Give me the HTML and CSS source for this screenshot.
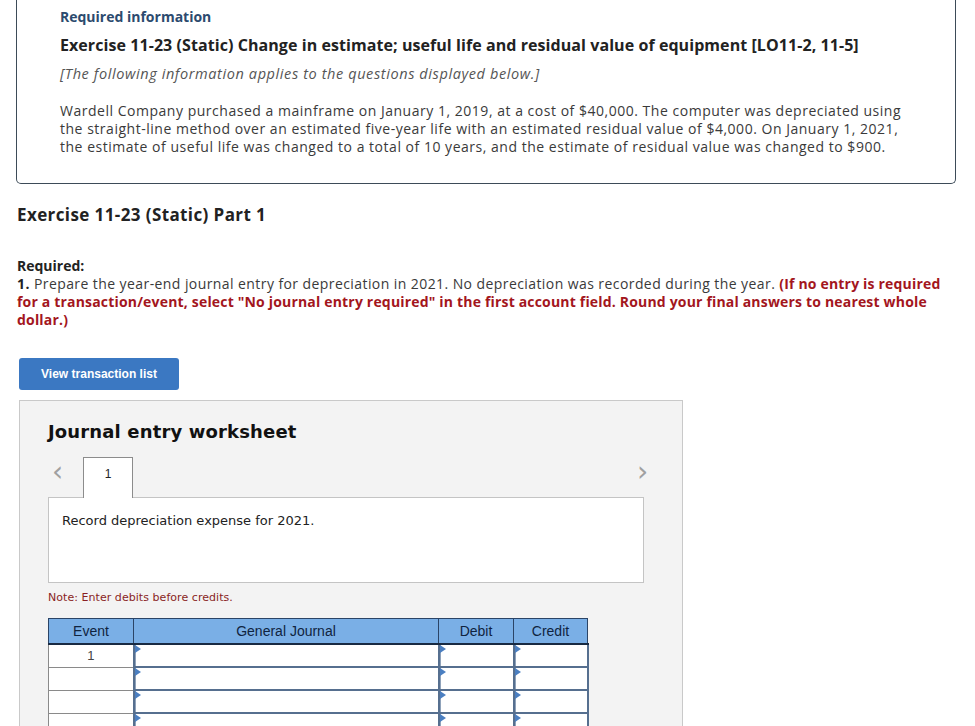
FILE: index.html
```html
<!DOCTYPE html>
<html>
<head>
<meta charset="utf-8">
<link rel="stylesheet" href="styles.css">
</head>
<body>
<div class="info-box">
  <div class="req-info">Required information</div>
  <h1 class="ex-title">Exercise 11-23 (Static) Change in estimate; useful life and residual value of equipment [LO11-2, 11-5]</h1>
  <p class="applies">[The following information applies to the questions displayed below.]</p>
  <p class="scenario">Wardell Company purchased a mainframe on January 1, 2019, at a cost of $40,000. The computer was depreciated using the straight-line method over an estimated five-year life with an estimated residual value of $4,000. On January 1, 2021, the estimate of useful life was changed to a total of 10 years, and the estimate of residual value was changed to $900.</p>
</div>

<h2 class="part-title">Exercise 11-23 (Static) Part 1</h2>

<div class="required">
  <div class="req-label">Required:</div>
  <p class="req-text"><b>1.</b> Prepare the year-end journal entry for depreciation in 2021. No depreciation was recorded during the year. <span class="red">(If no entry is required for a transaction/event, select "No journal entry required" in the first account field. Round your final answers to nearest whole dollar.)</span></p>
</div>

<button class="view-btn">View transaction list</button>

<div class="worksheet">
  <h3 class="ws-title">Journal entry worksheet</h3>
  <div class="nav-row">
    <span class="arrow">&lsaquo;</span>
    <span class="tab">1</span>
    <span class="spacer"></span>
    <span class="arrow">&rsaquo;</span>
  </div>
  <div class="desc">Record depreciation expense for 2021.</div>
  <div class="note">Note: Enter debits before credits.</div>
  <table class="journal">
    <thead>
      <tr><th class="c-event">Event</th><th class="c-gj">General Journal</th><th class="c-dr">Debit</th><th class="c-cr">Credit</th></tr>
    </thead>
    <tbody>
      <tr><td class="ev">1</td><td class="inp"></td><td class="inp"></td><td class="inp"></td></tr>
      <tr><td class="ev"></td><td class="inp"></td><td class="inp"></td><td class="inp"></td></tr>
      <tr><td class="ev"></td><td class="inp"></td><td class="inp"></td><td class="inp"></td></tr>
      <tr><td class="ev"></td><td class="inp"></td><td class="inp"></td><td class="inp"></td></tr>
      <tr><td class="ev"></td><td class="inp"></td><td class="inp"></td><td class="inp"></td></tr>
    </tbody>
  </table>
</div>
</body>
</html>
```

FILE: styles.css
```css
html, body {
  margin: 0;
  padding: 0;
  background: #ffffff;
}
body {
  font-family: "Open Sans", "Lato", sans-serif;
  color: #333333;
  height: 726px;
  overflow: hidden;
}
.info-box {
  margin: 0 19px 0 16px;
  border: 1px solid #3d4b58;
  border-top: none;
  border-radius: 0 0 5px 5px;
  padding: 8px 40px 27px 43px;
}
.req-info {
  font-size: 14px;
  line-height: 18px;
  font-weight: 700;
  color: #2c4a6e;
}
.ex-title {
  margin: 9px 0 0 0;
  font-size: 16px;
  line-height: 20px;
  font-weight: 700;
  color: #222222;
  letter-spacing: 0.07px;
}
.applies {
  margin: 10px 0 0 0;
  font-size: 14.5px;
  line-height: 18px;
  font-style: italic;
  color: #555555;
  letter-spacing: 0.6px;
}
.scenario {
  margin: 19px 0 0 0;
  font-size: 14px;
  line-height: 18px;
  color: #3a3a3a;
  letter-spacing: 0.52px;
}
.part-title {
  margin: 20px 0 0 17px;
  font-size: 17px;
  line-height: 22px;
  font-weight: 700;
  color: #222222;
  letter-spacing: 0.4px;
}
.required {
  margin: 31px 24px 0 17px;
  font-size: 14px;
  line-height: 18px;
  color: #3a3a3a;
  letter-spacing: 0.42px;
}
.req-label {
  font-weight: 700;
  color: #222222;
  letter-spacing: 0;
}
.req-text {
  margin: 0;
}
.req-text b {
  color: #222222;
}
.red {
  font-weight: 700;
  color: #a3161d;
  letter-spacing: 0.18px;
}
.view-btn {
  display: block;
  margin: 29px 0 0 19px;
  width: 160px;
  height: 32px;
  border: none;
  border-radius: 3px;
  background: #3b78c2;
  color: #ffffff;
  font-family: "Liberation Sans", Arial, sans-serif;
  font-size: 12px;
  font-weight: 700;
  padding: 0;
}
.worksheet {
  margin: 10px 0 0 19px;
  width: 634px;
  background: #f3f3f3;
  border: 1px solid #c9c9c9;
  padding: 19px 0 40px 28px;
}
.ws-title {
  margin: 0;
  font-family: "DejaVu Sans", Verdana, sans-serif;
  font-size: 18px;
  line-height: 24px;
  font-weight: 700;
  color: #111111;
  letter-spacing: 0.15px;
}
.nav-row {
  display: flex;
  align-items: flex-start;
  width: 609px;
  margin-top: 13px;
  height: 40px;
}
.arrow {
  font-family: "DejaVu Sans", sans-serif;
  font-size: 28px;
  line-height: 24px;
  color: #a0a0a0;
  width: 20px;
  margin-top: 3px;
  padding-left: 4px;
}
.tab {
  box-sizing: border-box;
  margin-left: 11px;
  width: 50px;
  height: 41px;
  background: #ffffff;
  border: 1px solid #8c8c8c;
  border-bottom: none;
  text-align: center;
  font-family: "Liberation Sans", Arial, sans-serif;
  font-size: 12px;
  line-height: 32px;
  color: #222222;
  position: relative;
  z-index: 1;
}
.spacer {
  flex: 1;
}
.desc {
  box-sizing: border-box;
  width: 596px;
  height: 86px;
  background: #ffffff;
  border: 1px solid #c4c4c4;
  padding: 14px 13px;
  font-family: "DejaVu Sans", Verdana, sans-serif;
  font-size: 13px;
  line-height: 18px;
  color: #222222;
}
.note {
  margin-top: 8px;
  font-family: "DejaVu Sans", Verdana, sans-serif;
  font-size: 11px;
  line-height: 14px;
  color: #8a1f24;
  letter-spacing: 0.05px;
}
.journal {
  margin-top: 13px;
  border-collapse: collapse;
  table-layout: fixed;
  width: 535px;
  font-family: "Liberation Sans", Arial, sans-serif;
  font-size: 14px;
}
.journal th {
  height: 24px;
  padding: 0;
  background: #7aafe6;
  color: #10243f;
  font-weight: 400;
  border: 1px solid #2b4466;
  border-bottom: 2px solid #182a42;
  text-align: center;
}
.c-event { width: 84px; }
.c-gj { width: 304px; }
.c-dr { width: 74px; }
.c-cr { width: 73px; }
.journal td {
  height: 21px;
  padding: 0;
  background: #ffffff;
}
.journal td.ev {
  border: 1px solid #8a8a8a;
  text-align: center;
  color: #444444;
  font-size: 13px;
  vertical-align: middle;
}
.journal td.inp {
  border: 2px solid #566f8f;
  box-shadow: inset 1px 0 0 #8fa2ba;
  position: relative;
}
.journal td.inp::before {
  content: "";
  position: absolute;
  left: 0;
  top: 0;
  border-top: 4px solid transparent;
  border-bottom: 4px solid transparent;
  border-left: 6px solid #4b7fc1;
}
```
